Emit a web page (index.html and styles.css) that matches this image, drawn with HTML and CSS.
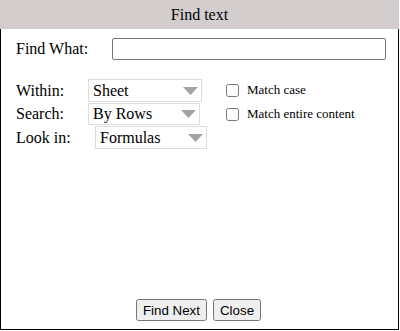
FILE: index.html
```html
<!DOCTYPE html>
<html lang="en">
<head>
    <meta charset="UTF-8">
    <title>Find text</title>
    <link rel="stylesheet" href="styles.css">
</head>
<body>
    <div class="dialog">
        <div class="title">Find text</div>
        <div class="content">
            <div class="find-row">
                <label class="find-label" for="findWhat">Find What:</label>
                <input type="text" class="find-input" id="findWhat">
            </div>

            <div class="options">
                <div class="selects">
                    <div class="opt-row">
                        <span class="opt-label">Within:</span>
                        <div class="select sel-within">
                            <span>Sheet</span>
                            <svg class="arrow" width="15" height="8" viewBox="0 0 15 8"><path d="M0 0H15L7.5 8Z" fill="#a3a3a3"/></svg>
                        </div>
                    </div>
                    <div class="opt-row">
                        <span class="opt-label">Search:</span>
                        <div class="select sel-search">
                            <span>By Rows</span>
                            <svg class="arrow" width="15" height="8" viewBox="0 0 15 8"><path d="M0 0H15L7.5 8Z" fill="#a3a3a3"/></svg>
                        </div>
                    </div>
                    <div class="opt-row">
                        <span class="opt-label wide">Look in:</span>
                        <div class="select sel-look">
                            <span>Formulas</span>
                            <svg class="arrow" width="15" height="8" viewBox="0 0 15 8"><path d="M0 0H15L7.5 8Z" fill="#a3a3a3"/></svg>
                        </div>
                    </div>
                </div>

                <div class="checks">
                    <label class="check"><input type="checkbox"> Match case</label>
                    <label class="check"><input type="checkbox"> Match entire content</label>
                </div>
            </div>

            <div class="buttons">
                <button class="btn">Find Next</button>
                <button class="btn">Close</button>
            </div>
        </div>
    </div>
</body>
</html>
```

FILE: styles.css
```css
* {
    margin: 0;
    padding: 0;
    box-sizing: border-box;
}

body {
    font-family: 'Liberation Serif', 'Times New Roman', serif;
    font-size: 16px;
    color: #000;
    background: white;
}

.dialog {
    width: 399px;
    height: 330px;
    display: flex;
    flex-direction: column;
}

.title {
    height: 29px;
    line-height: 29px;
    text-align: center;
    background: #d3cdcd;
}

.content {
    flex: 1;
    display: flex;
    flex-direction: column;
    border: 1px solid #000;
    border-top: none;
    padding: 9px 0 8px 15px;
}

.find-row {
    display: flex;
    align-items: center;
    height: 22px;
}

.find-label {
    width: 96px;
}

.find-input {
    width: 274px;
    height: 22px;
    border: 1px solid #767676;
    border-radius: 2px;
    font: inherit;
}

.options {
    display: flex;
    margin-top: 19px;
}

.selects {
    width: 210px;
    display: flex;
    flex-direction: column;
    gap: 1px;
}

.opt-row {
    display: flex;
    align-items: center;
}

.opt-label {
    width: 72px;
}

.opt-label.wide {
    width: 79px;
}

.select {
    display: flex;
    align-items: center;
    justify-content: space-between;
    height: 22px;
    border: 1px solid #dcdcdc;
    padding: 0 3px 0 4px;
}

.sel-within {
    width: 114px;
    height: 23px;
}

.sel-search {
    width: 112px;
}

.sel-look {
    width: 112px;
    height: 23px;
}

.arrow {
    display: block;
}

.checks {
    display: flex;
    flex-direction: column;
    gap: 8px;
    padding-top: 3px;
}

.check {
    display: flex;
    align-items: center;
    gap: 8px;
    font-size: 13px;
}

.check input {
    width: 13px;
    height: 13px;
    margin: 0;
}

.buttons {
    margin-top: auto;
    display: flex;
    justify-content: center;
    gap: 6px;
    padding-right: 17px;
}

.btn {
    font-family: 'Liberation Sans', Arial, sans-serif;
    font-size: 13.33px;
    height: 22px;
    padding: 0 5px;
}
```
